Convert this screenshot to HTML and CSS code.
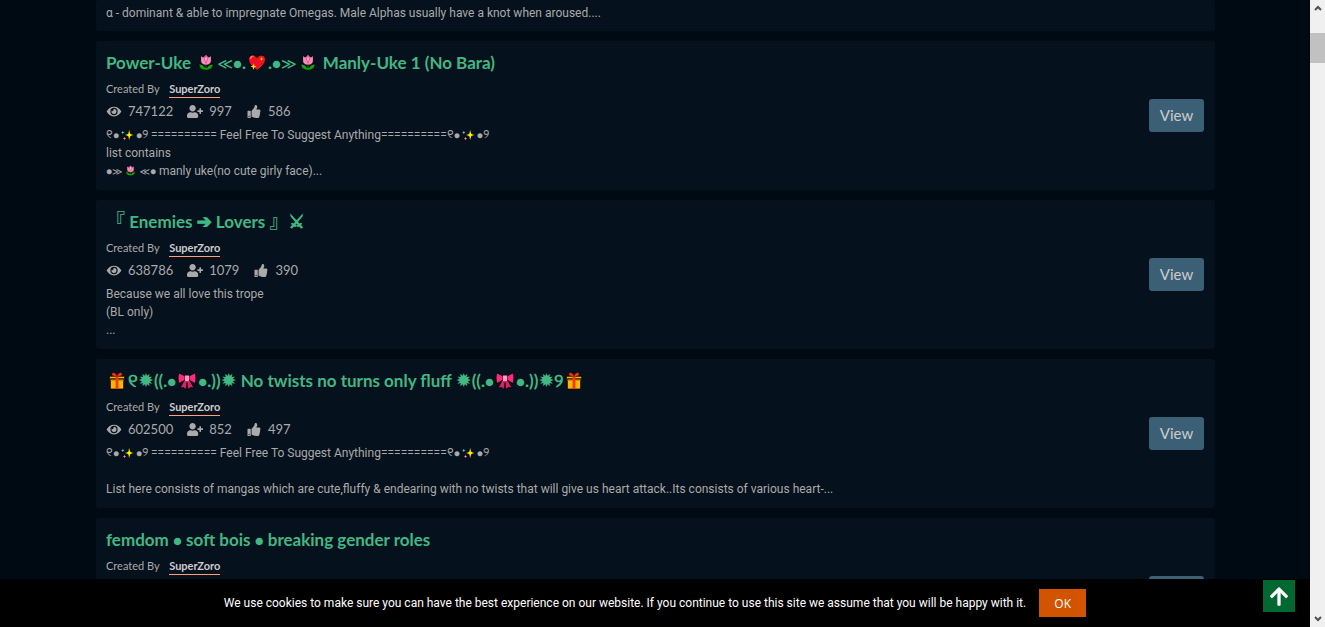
FILE: index.html
```html
<!DOCTYPE html>
<html lang="en">
<head>
<meta charset="utf-8">
<title>Lists</title>
<link rel="stylesheet" href="styles.css">
</head>
<body>
<svg class="sprite" aria-hidden="true">
  <symbol id="eye" viewBox="0 0 576 512"><path d="M572.52 241.4C518.29 135.59 410.93 64 288 64S57.68 135.64 3.48 241.41a32.35 32.35 0 0 0 0 29.19C57.71 376.41 165.07 448 288 448s230.32-71.64 284.52-177.41a32.35 32.35 0 0 0 0-29.19zM288 400a144 144 0 1 1 144-144 143.93 143.93 0 0 1-144 144zm0-240a95.31 95.31 0 0 0-25.31 3.79 47.85 47.85 0 0 1-66.9 66.9A95.78 95.78 0 1 0 288 160z"/></symbol>
  <symbol id="user-plus" viewBox="0 0 640 512"><path d="M624 208h-64v-64c0-8.800-7.200-16-16-16h-32c-8.800 0-16 7.200-16 16v64h-64c-8.800 0-16 7.200-16 16v32c0 8.800 7.200 16 16 16h64v64c0 8.800 7.200 16 16 16h32c8.800 0 16-7.200 16-16v-64h64c8.800 0 16-7.200 16-16v-32c0-8.800-7.200-16-16-16zm-400 48c70.700 0 128-57.300 128-128S294.700 0 224 0 96 57.300 96 128s57.300 128 128 128zm89.600 32h-16.700c-22.200 10.200-46.900 16-72.900 16s-50.600-5.800-72.900-16h-16.700C60.200 288 0 348.200 0 422.400V464c0 26.500 21.500 48 48 48h352c26.500 0 48-21.500 48-48v-41.600c0-74.200-60.200-134.400-134.400-134.400z"/></symbol>
  <symbol id="thumb" viewBox="0 0 512 512"><path d="M104 224H24c-13.255 0-24 10.745-24 24v240c0 13.255 10.745 24 24 24h80c13.255 0 24-10.745 24-24V248c0-13.255-10.745-24-24-24zM64 472c-13.255 0-24-10.745-24-24s10.745-24 24-24 24 10.745 24 24-10.745 24-24 24zM384 81.452c0 42.416-25.97 66.208-33.277 94.548h101.723c33.397 0 59.397 27.746 59.553 58.098.084 17.938-7.546 37.249-19.439 49.197l-.11.11c9.836 23.337 8.237 56.037-9.308 79.469 8.681 25.895-.069 57.704-16.382 74.757 4.298 17.598 2.244 32.575-6.148 44.632C440.202 511.587 389.616 512 346.839 512l-2.845-.001c-48.287-.017-87.806-17.598-119.56-31.725-15.957-7.099-36.821-15.887-52.651-16.178-6.540-.12-11.783-5.457-11.783-11.998v-213.770c0-3.200 1.282-6.271 3.558-8.521 39.614-39.144 56.648-80.587 89.117-113.111 14.804-14.832 20.188-37.236 25.393-58.902C282.515 39.293 291.817 0 312 0c24 0 72 8 72 81.452z"/></symbol>
  <symbol id="arrow-up" viewBox="0 0 448 512"><path d="M34.9 289.5l-22.2-22.2c-9.4-9.4-9.4-24.6 0-33.9L207 39c9.4-9.4 24.6-9.4 33.9 0l194.3 194.3c9.4 9.4 9.4 24.6 0 33.9L413 289.4c-9.5 9.5-25 9.3-34.3-.4L264 168.6V456c0 13.3-10.7 24-24 24h-32c-13.3 0-24-10.7-24-24V168.6L69.2 289.1c-9.3 9.8-24.8 10-34.3.4z"/></symbol>
  <symbol id="tulip" viewBox="1 0 16 20"><g stroke="#000" stroke-linejoin="round"><path d="M8 10h2v5c2-3 4-4 7-4-.5 5-3 7-8 7s-7.500-2-8-7c3 0 5 1 7 4z" fill="#16a010"/><path d="M3 1.500l3 2 3-3 3 3 3-2v6c0 3-2.500 5-6 5s-6-2-6-5z" fill="#f48fb8"/></g><path d="M9 1.500l2.500 3.500L9 11 6.500 5z" fill="#e8458b"/><path d="M7.500 5L9 3l1.500 2L9 9z" fill="#ffb3d0"/></symbol>
  <symbol id="heart" viewBox="1 1 18 18"><path d="M10 17.500C5 13.500 1.500 10.500 1.500 6.500 1.500 1.500 7.500.5 10 4.500c2.500-4 8.500-3 8.500 2 0 4-3.500 7-8.500 11z" fill="#eb1226" stroke="#000"/><path d="M3.500 6c0-2 1.500-3 3-2.500" stroke="#ff6b78" stroke-width="1.500" fill="none"/><path d="M6.500 10.500l.8 2.200 2.200.8-2.200.8-.8 2.700-.8-2.700-2.200-.8 2.200-.8zM14.500 4l.5 1.500 1.500.5-1.500.5-.5 1.500-.5-1.500-1.500-.5 1.500-.5z" fill="#ffe600"/></symbol>
  <symbol id="gift" viewBox="0 0 18 19"><path d="M2 7h14v11H2zM1 4.500h16V8H1z" fill="#ffb400" stroke="#000" stroke-width=".8"/><path d="M2 8h14v1.200H2z" fill="#d98500"/><path d="M7.500 4.500h3V18h-3z" fill="#ee3a16"/><path d="M9 4.500C4.500 4.500 3 3 4 1.500S8 1.500 9 4.500c1-3 4-4.500 5-3s-.5 3-5 3z" fill="#ee3a16" stroke="#a61c00" stroke-width=".5"/></symbol>
  <symbol id="bow" viewBox="1 1 18 18"><path d="M8 8l-5 9 3.500-.5L9 18.500l1-7 1 7 2.500-2L17 17l-5-9z" fill="#d92268" stroke="#000" stroke-width=".7"/><path d="M8 5L2 2C.8 4.500.8 9 2 12.500l6-3.500zM12 5L18 2c1.200 2.500 1.200 7 0 10.500L12 9z" fill="#f52d7b" stroke="#000" stroke-width=".7"/><path d="M8 4.500h4v5.500H8z" fill="#ff9ac4"/></symbol>
  <symbol id="sparkles" viewBox="1 1 15 14"><path d="M10.500 1.500l1.300 4.900 3.700 1.600-3.700 1.600-1.300 4.900-1.300-4.900L5.500 8l3.700-1.600z" fill="#fff000" stroke="#111" stroke-width=".5"/><path d="M3 3l.6 1.400L5 5l-1.400.6L3 7l-.6-1.400L1 5l1.400-.6z" fill="#35d8f0"/><path d="M5 10l.6 1.400 1.400.6-1.400.6L5 14l-.6-1.400L3 12l1.400-.6z" fill="#ff7fa8"/></symbol>
  <symbol id="chevron" viewBox="0 0 8 8"><path d="M1 2l3 3 3-3" fill="none" stroke="#505050" stroke-width="2"/></symbol>
</svg>

<main class="lists">
  <article class="card card-clipped">
    <div class="body"><p class="desc">α - dominant &amp; able to impregnate Omegas. Male Alphas usually have a knot when aroused....</p></div>
  </article>

  <article class="card">
    <div class="body">
      <h2 class="title">Power-Uke <svg class="emoji"><use href="#tulip"/></svg><span class="sym">≪●</span>.<svg class="emoji"><use href="#heart"/></svg>.<span class="sym">●≫</span><svg class="emoji"><use href="#tulip"/></svg> Manly-Uke 1 (No Bara)</h2>
      <p class="meta">Created By <a class="author" href="#">SuperZoro</a></p>
      <div class="stats"><span class="stat"><svg class="icon"><use href="#eye"/></svg>747122</span><span class="stat"><svg class="icon"><use href="#user-plus"/></svg>997</span><span class="stat"><svg class="icon"><use href="#thumb"/></svg>586</span></div>
      <p class="desc"><span class="sym-lg">୧</span><span class="sym">●</span><svg class="emoji"><use href="#sparkles"/></svg><span class="sym">●</span><span class="sym-lg">୨</span> ========== Feel Free To Suggest Anything==========<span class="sym-lg">୧</span><span class="sym">●</span><svg class="emoji"><use href="#sparkles"/></svg><span class="sym">●</span><span class="sym-lg">୨</span><br>list contains<br><span class="sym">●≫</span><svg class="emoji"><use href="#tulip"/></svg><span class="sym">≪●</span> manly uke(no cute girly face)...</p>
    </div>
    <button class="view" type="button">View</button>
  </article>

  <article class="card">
    <div class="body">
      <h2 class="title"><span class="sym-lg">『</span> Enemies <span class="sym-lg sym-bold">➔</span> Lovers <span class="sym-lg">』</span><span class="sym-lg sym-bold">⚔</span></h2>
      <p class="meta">Created By <a class="author" href="#">SuperZoro</a></p>
      <div class="stats"><span class="stat"><svg class="icon"><use href="#eye"/></svg>638786</span><span class="stat"><svg class="icon"><use href="#user-plus"/></svg>1079</span><span class="stat"><svg class="icon"><use href="#thumb"/></svg>390</span></div>
      <p class="desc">Because we all love this trope<br>(BL only)<br>...</p>
    </div>
    <button class="view" type="button">View</button>
  </article>

  <article class="card">
    <div class="body">
      <h2 class="title"><svg class="emoji"><use href="#gift"/></svg><span class="sym-lg">୧✹</span>((.<span class="sym">●</span><svg class="emoji"><use href="#bow"/></svg><span class="sym">●</span>.))<span class="sym-lg">✹</span> No twists no turns only fluff <span class="sym-lg">✹</span>((.<span class="sym">●</span><svg class="emoji"><use href="#bow"/></svg><span class="sym">●</span>.))<span class="sym-lg">✹୨</span><svg class="emoji"><use href="#gift"/></svg></h2>
      <p class="meta">Created By <a class="author" href="#">SuperZoro</a></p>
      <div class="stats"><span class="stat"><svg class="icon"><use href="#eye"/></svg>602500</span><span class="stat"><svg class="icon"><use href="#user-plus"/></svg>852</span><span class="stat"><svg class="icon"><use href="#thumb"/></svg>497</span></div>
      <p class="desc"><span class="sym-lg">୧</span><span class="sym">●</span><svg class="emoji"><use href="#sparkles"/></svg><span class="sym">●</span><span class="sym-lg">୨</span> ========== Feel Free To Suggest Anything==========<span class="sym-lg">୧</span><span class="sym">●</span><svg class="emoji"><use href="#sparkles"/></svg><span class="sym">●</span><span class="sym-lg">୨</span><br><br>List here consists of mangas which are cute,fluffy &amp; endearing with no twists that will give us heart attack..Its consists of various heart-...</p>
    </div>
    <button class="view" type="button">View</button>
  </article>

  <article class="card">
    <div class="body">
      <h2 class="title">femdom <span class="sym">●</span> soft bois <span class="sym">●</span> breaking gender roles</h2>
      <p class="meta">Created By <a class="author" href="#">SuperZoro</a></p>
    </div>
    <button class="view" type="button">View</button>
  </article>
</main>

<footer class="cookies">
  <p class="cookies-text">We use cookies to make sure you can have the best experience on our website. If you continue to use this site we assume that you will be happy with it.</p>
  <button class="ok" type="button">OK</button>
</footer>
<a class="to-top" href="#" aria-label="Back to top"><svg class="to-top-icon"><use href="#arrow-up"/></svg></a>
<div class="scrollbar" aria-hidden="true">
  <svg class="chevron chevron-up"><use href="#chevron"/></svg>
  <div class="thumb"></div>
  <svg class="chevron chevron-down"><use href="#chevron"/></svg>
</div>
</body>
</html>
```
FILE: styles.css
```css
* { box-sizing: border-box; }
body {
  margin: 0;
  padding-right: 15px;
  background: #000a13;
  color: #aaa;
  font-family: Lato, "Open Sans", "Noto Sans", "Noto Sans CJK JP", sans-serif;
  font-size: 12px;
  line-height: 18px;
}
h2, p { margin: 0; }
.sprite { position: absolute; width: 0; height: 0; }
.lists {
  display: flex;
  flex-direction: column;
  gap: 10px;
  height: 100vh;
  overflow: hidden;
  padding: 0 95px 0 96px;
}
.card {
  display: flex;
  flex-shrink: 0;
  align-items: center;
  justify-content: space-between;
  min-height: 149px;
  padding: 10px;
  border-radius: 3px;
  background: #05111c;
}
.card-clipped { min-height: 0; padding: 4px 10px 9px; }
.body { align-self: flex-start; }
.title {
  color: #41b883;
  font-size: 17px;
  font-weight: 700;
  line-height: 24px;
}
.sym, .sym-lg {
  font-family: Lato, "DejaVu Sans", "Noto Sans", "Noto Sans CJK JP", sans-serif;
  line-height: 1;
}
.sym { font-size: 15px; font-weight: 400; }
.sym-lg { font-size: 19px; }
.desc .sym { font-size: 10px; }
.desc .sym-lg { font-size: 13px; }
.title .sym-bold { font-family: "DejaVu Sans", sans-serif; font-size: 18px; -webkit-text-stroke: 1px currentColor; }
.emoji { width: 18px; height: 18px; margin: 0 2px; vertical-align: -3px; }
.desc .emoji { width: 13px; height: 12px; margin: 0 2px; vertical-align: -2px; }
.meta { margin-top: 5px; font-size: 11px; }
.author {
  display: inline-block;
  margin-left: 7px;
  border-bottom: 1px solid #ffa07a;
  color: #ccc;
  font-weight: 700;
  line-height: 16px;
  text-decoration: none;
}
.stats { display: flex; gap: 14px; margin-top: 4px; font-size: 13px; }
.stat { display: flex; align-items: center; gap: 6px; }
.icon { width: 16px; height: 13px; fill: currentColor; }
.desc { margin: 6px 0 -1px; font-family: Roboto, "Noto Sans", sans-serif; }
.card-clipped .desc { margin: 0; }
.view {
  width: 55px;
  height: 33px;
  margin-right: 1px;
  padding: 0 0 2px;
  border: 0;
  border-radius: 3px;
  background: #3b6075;
  color: #ccc;
  font: 15px Lato, sans-serif;
}
.cookies {
  position: fixed;
  left: 0;
  right: 15px;
  bottom: 0;
  display: flex;
  align-items: center;
  justify-content: center;
  gap: 13px;
  padding: 10px;
  background: #000;
  color: #fff;
  font-family: Roboto, sans-serif;
}
.ok {
  width: 47px;
  height: 28px;
  padding: 0;
  border: 0;
  background: #d35400;
  color: #fff;
  font: 12px "Open Sans", sans-serif;
}
.to-top {
  position: fixed;
  right: 30px;
  bottom: 15px;
  display: grid;
  place-items: center;
  width: 32px;
  height: 32px;
  background: #006830;
}
.to-top-icon { width: 20px; height: 21px; fill: #fff; }
.scrollbar {
  position: fixed;
  top: 0;
  right: 0;
  bottom: 0;
  display: flex;
  flex-direction: column;
  align-items: center;
  width: 15px;
  padding: 4px 0;
  background: #f0f0f0;
}
.thumb { width: 15px; height: 30px; margin-top: 21px; background: #c1c1c1; }
.chevron { width: 8px; height: 8px; }
.chevron-up { transform: rotate(180deg); }
.chevron-down { margin-top: auto; }
```
